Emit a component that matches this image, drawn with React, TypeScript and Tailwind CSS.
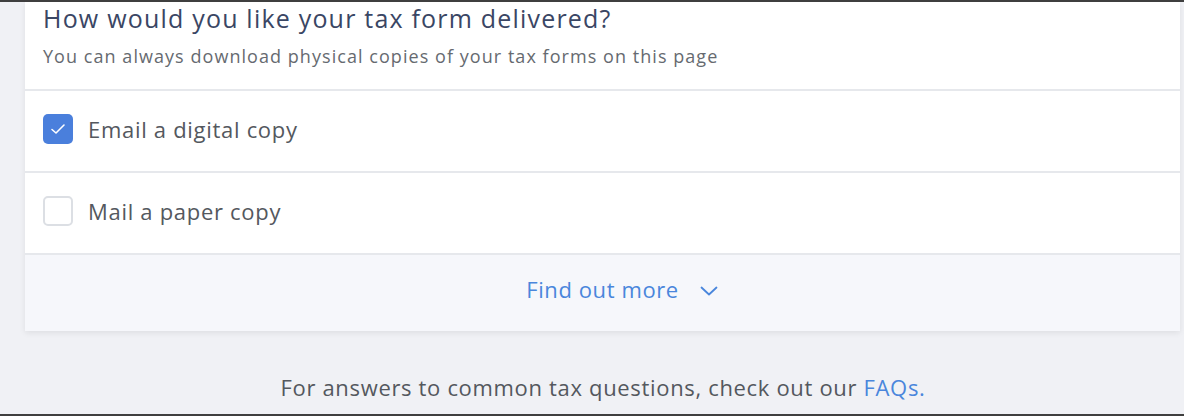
import React from "react";

export default function App() {
  const font = { fontFamily: "'Open Sans', sans-serif" };
  return (
    <div
      className="w-[1184px] h-[416px] overflow-hidden bg-[#f0f1f5] border-t-2 border-b-2 border-[#3f3f3f] flex flex-col"
      style={font}
    >
      <div className="ml-[25px] mr-[4px] bg-white shadow-[0_2px_6px_rgba(0,0,0,0.08)] flex flex-col">
        <div className="h-[87px] pl-[18px] flex flex-col">
          <div className="text-[25px] leading-[32px] tracking-[1.2px] text-[#3a4664]">
            How would you like your tax form delivered?
          </div>
          <div className="text-[18px] leading-[24px] tracking-[1.05px] text-[#666a70] mt-[10px]">
            You can always download physical copies of your tax forms on this page
          </div>
        </div>
        <div className="h-[82px] border-t-2 border-[#e6e8ec] pl-[18px] pb-[4px] flex items-center gap-[15px]">
          <div className="w-[30px] h-[30px] rounded-[5px] bg-[#4a7fdc] flex items-center justify-center">
            <svg width="16" height="12" viewBox="0 0 16 12" fill="none">
              <path d="M2 6.5L6 10L14 2" stroke="white" strokeWidth="1.6" strokeLinecap="round" strokeLinejoin="round" />
            </svg>
          </div>
          <span className="text-[22px] tracking-[0.7px] text-[#54585e]">Email a digital copy</span>
        </div>
        <div className="h-[82px] border-t-2 border-[#e6e8ec] pl-[18px] pb-[4px] flex items-center gap-[15px]">
          <div className="w-[30px] h-[30px] rounded-[5px] border-2 border-[#dcdfe4] bg-white" />
          <span className="text-[22px] tracking-[0.7px] text-[#54585e]">Mail a paper copy</span>
        </div>
        <div className="h-[78px] border-t-2 border-[#e6e8ec] bg-[#f6f7fb] flex items-center justify-center gap-[21px] pl-[39px] pb-[8px]">
          <span className="text-[22px] tracking-[0.6px] text-[#4a86dc]">Find out more</span>
          <svg width="18" height="10" viewBox="0 0 18 10" fill="none" className="mt-[4px]">
            <path d="M1.5 1.5L9 8.5L16.5 1.5" stroke="#4a86dc" strokeWidth="1.8" strokeLinecap="round" strokeLinejoin="round" />
          </svg>
        </div>
      </div>
      <div className="mt-[40px] text-center text-[22px] tracking-[0.67px] text-[#54585e] pl-[22px]">
        For answers to common tax questions, check out our <span className="text-[#4a86dc]">FAQs.</span>
      </div>
    </div>
  );
}
